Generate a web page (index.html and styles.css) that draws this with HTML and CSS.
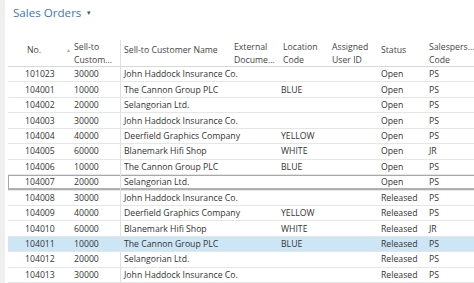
FILE: index.html
```html
<!DOCTYPE html>
<html lang="en">

<head>
    <meta charset="UTF-8">
    <title>Sales Orders</title>
    <link rel="stylesheet" href="styles.css">
</head>

<body>
    <div class="page">
        <div class="side-strip"></div>
        <div class="content">
            <div class="title">Sales Orders <span class="caret">&#9662;</span></div>

            <div class="list">
                <div class="row head">
                    <div class="c1">No.<span class="sort">&#9650;</span></div>
                    <div class="c2">Sell-to<br>Custom...</div>
                    <div class="c3">Sell-to Customer Name</div>
                    <div>External<br>Docume...</div>
                    <div>Location<br>Code</div>
                    <div>Assigned<br>User ID</div>
                    <div>Status</div>
                    <div>Salespers...<br>Code</div>
                </div>

                <div class="row">
                    <div class="c1">101023</div><div class="c2">30000</div><div class="c3">John Haddock Insurance Co.</div>
                    <div></div><div></div><div></div><div>Open</div><div>PS</div>
                </div>
                <div class="row">
                    <div class="c1">104001</div><div class="c2">10000</div><div class="c3">The Cannon Group PLC</div>
                    <div></div><div class="loc">BLUE</div><div></div><div>Open</div><div>PS</div>
                </div>
                <div class="row">
                    <div class="c1">104002</div><div class="c2">20000</div><div class="c3">Selangorian Ltd.</div>
                    <div></div><div></div><div></div><div>Open</div><div>PS</div>
                </div>
                <div class="row">
                    <div class="c1">104003</div><div class="c2">30000</div><div class="c3">John Haddock Insurance Co.</div>
                    <div></div><div></div><div></div><div>Open</div><div>PS</div>
                </div>
                <div class="row">
                    <div class="c1">104004</div><div class="c2">40000</div><div class="c3">Deerfield Graphics Company</div>
                    <div></div><div class="loc">YELLOW</div><div></div><div>Open</div><div>PS</div>
                </div>
                <div class="row">
                    <div class="c1">104005</div><div class="c2">60000</div><div class="c3">Blanemark Hifi Shop</div>
                    <div></div><div class="loc">WHITE</div><div></div><div>Open</div><div>JR</div>
                </div>
                <div class="row">
                    <div class="c1">104006</div><div class="c2">10000</div><div class="c3">The Cannon Group PLC</div>
                    <div></div><div class="loc">BLUE</div><div></div><div>Open</div><div>PS</div>
                </div>
                <div class="row focused">
                    <div class="c1">104007</div><div class="c2">20000</div><div class="c3">Selangorian Ltd.</div>
                    <div></div><div></div><div></div><div>Open</div><div>PS</div>
                </div>
                <div class="row">
                    <div class="c1">104008</div><div class="c2">30000</div><div class="c3">John Haddock Insurance Co.</div>
                    <div></div><div></div><div></div><div>Released</div><div>PS</div>
                </div>
                <div class="row">
                    <div class="c1">104009</div><div class="c2">40000</div><div class="c3">Deerfield Graphics Company</div>
                    <div></div><div class="loc">YELLOW</div><div></div><div>Released</div><div>PS</div>
                </div>
                <div class="row">
                    <div class="c1">104010</div><div class="c2">60000</div><div class="c3">Blanemark Hifi Shop</div>
                    <div></div><div class="loc">WHITE</div><div></div><div>Released</div><div>JR</div>
                </div>
                <div class="row selected">
                    <div class="c1">104011</div><div class="c2">10000</div><div class="c3">The Cannon Group PLC</div>
                    <div></div><div class="loc">BLUE</div><div></div><div>Released</div><div>PS</div>
                </div>
                <div class="row">
                    <div class="c1">104012</div><div class="c2">20000</div><div class="c3">Selangorian Ltd.</div>
                    <div></div><div></div><div></div><div>Released</div><div>PS</div>
                </div>
                <div class="row">
                    <div class="c1">104013</div><div class="c2">30000</div><div class="c3">John Haddock Insurance Co.</div>
                    <div></div><div></div><div></div><div>Released</div><div>PS</div>
                </div>
            </div>
        </div>
    </div>
</body>

</html>
```

FILE: styles.css
```css
body {
    margin: 0;
    background: #fff;
    color: #333;
    font-family: "Open Sans", "Noto Sans", sans-serif;
    font-size: 8.7px;
    overflow: hidden;
}

.page {
    display: flex;
    height: 283px;
}

.side-strip {
    width: 5px;
    background: #efefef;
    flex: none;
}

.content {
    flex: 1;
    padding-left: 3px;
}

.title {
    height: 40px;
    padding: 5px 0 0 5px;
    box-sizing: border-box;
    font-size: 11.6px;
    color: #3a77c0;
}

.caret {
    font-size: 7px;
    color: #555;
    margin-left: 3px;
    vertical-align: 2px;
}

.row {
    display: grid;
    grid-template-columns: 62px 50px 110px 49px 49px 49px 48px 60px;
    height: 15.45px;
    box-sizing: border-box;
    border-bottom: 1px solid #e6e6e6;
    align-items: center;
    white-space: nowrap;
}

.row > div {
    padding-left: 4px;
    height: 100%;
    display: flex;
    align-items: center;
    box-sizing: border-box;
}

.row > .c1 {
    padding-left: 17px;
}

.row > .c3 {
    border-left: 1px solid #e0e0e0;
    padding-left: 3px;
}

.row > .loc {
    padding-left: 2px;
}

.head {
    height: 27px;
    border-bottom: 1px solid #d8d8d8;
    line-height: 13px;
    color: #444;
}

.head > div {
    align-items: flex-start;
    padding-top: 1px;
}

.head > .c1 {
    padding-left: 19px;
    padding-top: 4px;
}

.head > .c3,
.head > div:nth-child(7) {
    padding-top: 4px;
}

.sort {
    font-size: 5px;
    color: #aaa;
    margin-left: 25px;
    line-height: 13px;
}

.focused {
    box-shadow: inset 1px 1px 0 #a9a9a9, inset 0 -2px 0 #b0b0b0;
}

.selected {
    background: #cde6f6;
}
```
